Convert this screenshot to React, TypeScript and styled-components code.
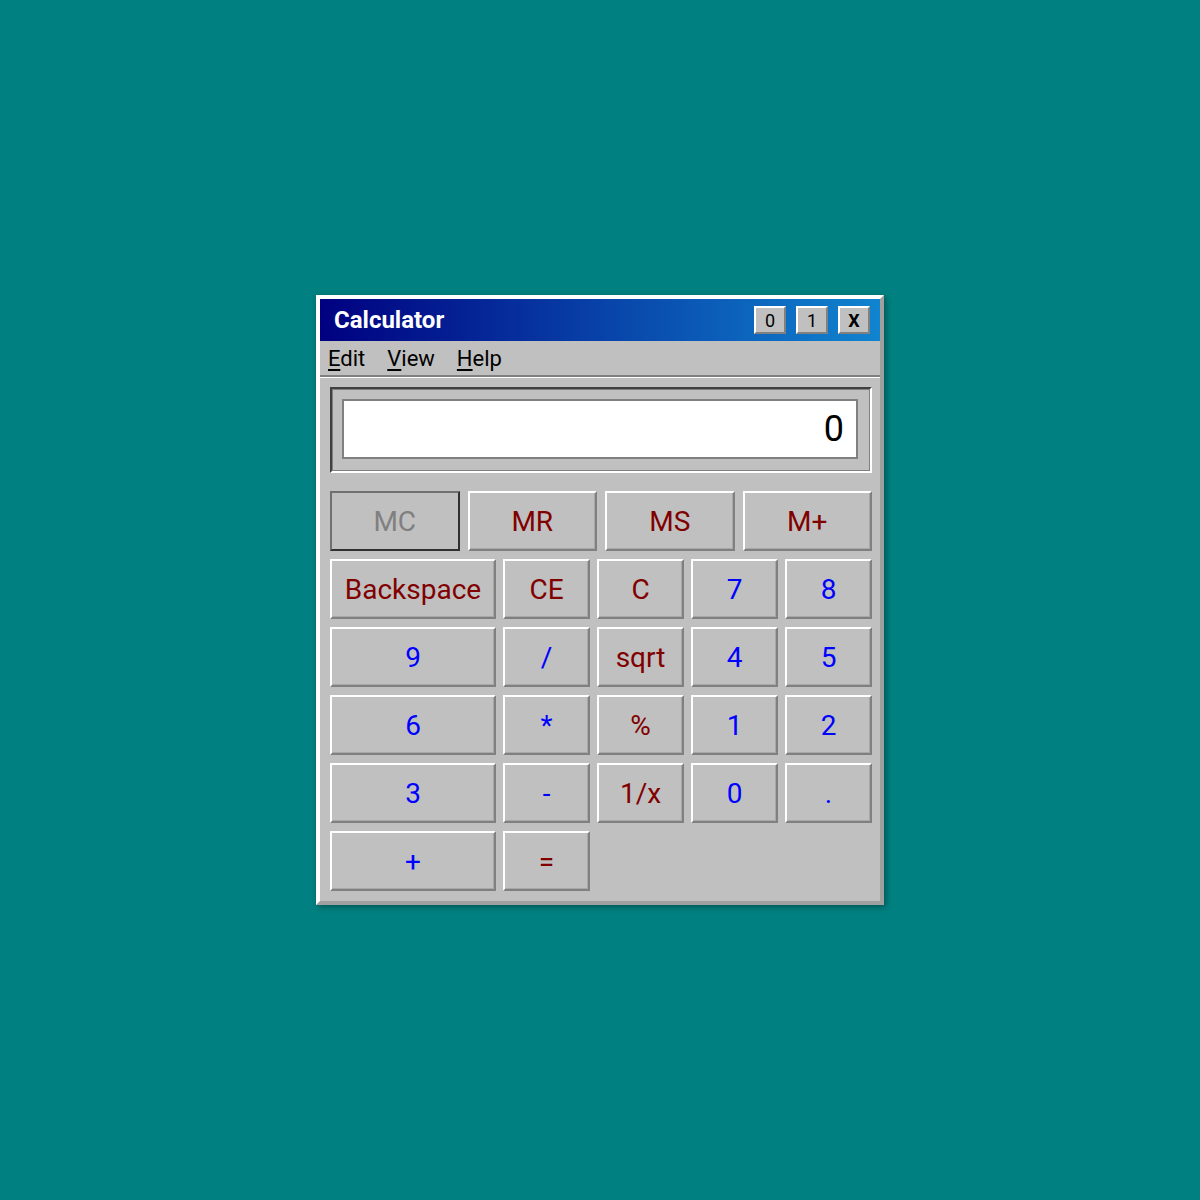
import styled, { createGlobalStyle } from 'styled-components';

const GlobalStyle = createGlobalStyle`
  html, body {
    margin: 0;
    padding: 0;
    background: #008080;
    font-family: Roboto, "Liberation Sans", sans-serif;
  }
`;

const Desktop = styled.div`
  min-height: 100vh;
  display: flex;
  align-items: center;
  justify-content: center;
`;

const Window = styled.div`
  width: 560px;
  background: #c0c0c0;
  border: 4px solid;
  border-color: #ffffff #a0a0a0 #a0a0a0 #ffffff;
  box-shadow: 2px 2px 6px rgba(0, 0, 0, 0.35);
`;

const TitleBar = styled.div`
  height: 42px;
  display: flex;
  align-items: center;
  padding: 0 10px 0 14px;
  background: linear-gradient(to right, #000080, #1084d0);
`;

const Title = styled.div`
  flex: 1;
  color: #ffffff;
  font-size: 24px;
  font-weight: 700;
`;

const TitleButtons = styled.div`
  display: flex;
  gap: 10px;
`;

const TitleButton = styled.button<{ $bold?: boolean }>`
  width: 32px;
  height: 28px;
  padding: 0;
  background: #c0c0c0;
  border: 2px solid;
  border-color: #ffffff #808080 #808080 #ffffff;
  font-family: inherit;
  font-size: 18px;
  font-weight: ${(p) => (p.$bold ? 700 : 400)};
  color: #000000;
`;

const MenuBar = styled.div`
  height: 34px;
  display: flex;
  align-items: center;
  gap: 22px;
  padding: 0 8px;
  font-size: 22px;
  color: #000000;
  border-bottom: 2px solid #808080;
  box-shadow: 0 1px 0 #ffffff;
`;

const MenuItem = styled.span`
  u {
    text-decoration-thickness: 2px;
    text-underline-offset: 3px;
  }
`;

const Body = styled.div`
  padding: 10px 8px 10px 10px;
`;

const DisplayFrame = styled.div`
  height: 86px;
  box-sizing: border-box;
  padding: 10px 12px 12px 10px;
  border: 2px solid;
  border-color: #404040 #ffffff #ffffff #404040;
  outline: 1px solid #808080;
  outline-offset: -3px;
`;

const Display = styled.div`
  height: 100%;
  box-sizing: border-box;
  background: #ffffff;
  border: 2px solid #808080;
  display: flex;
  align-items: center;
  justify-content: flex-end;
  padding-right: 12px;
  font-size: 36px;
  color: #000000;
`;

const MemoryRow = styled.div`
  margin-top: 18px;
  display: grid;
  grid-template-columns: repeat(4, 1fr);
  gap: 8px;
`;

const Keypad = styled.div`
  margin-top: 8px;
  display: grid;
  grid-template-columns: 166px repeat(4, 1fr);
  grid-auto-rows: 60px;
  column-gap: 7px;
  row-gap: 8px;
`;

const Key = styled.button<{ $tone: 'red' | 'blue' | 'off' }>`
  height: 60px;
  padding: 0;
  background: #c0c0c0;
  border: 2px solid;
  border-color: ${(p) =>
    p.$tone === 'off'
      ? '#707070 #303030 #303030 #707070'
      : '#ffffff #808080 #808080 #ffffff'};
  box-shadow: ${(p) => (p.$tone === 'off' ? 'none' : 'inset -1px -1px 0 #a8a8a8')};
  font-family: inherit;
  font-size: 28px;
  color: ${(p) => (p.$tone === 'red' ? '#800000' : p.$tone === 'blue' ? '#0000ff' : '#808080')};
`;

type Tone = 'red' | 'blue' | 'off';

const memoryKeys: [string, Tone][] = [
  ['MC', 'off'],
  ['MR', 'red'],
  ['MS', 'red'],
  ['M+', 'red'],
];

const keys: [string, Tone][] = [
  ['Backspace', 'red'],
  ['CE', 'red'],
  ['C', 'red'],
  ['7', 'blue'],
  ['8', 'blue'],
  ['9', 'blue'],
  ['/', 'blue'],
  ['sqrt', 'red'],
  ['4', 'blue'],
  ['5', 'blue'],
  ['6', 'blue'],
  ['*', 'blue'],
  ['%', 'red'],
  ['1', 'blue'],
  ['2', 'blue'],
  ['3', 'blue'],
  ['-', 'blue'],
  ['1/x', 'red'],
  ['0', 'blue'],
  ['.', 'blue'],
  ['+', 'blue'],
  ['=', 'red'],
];

function App() {
  return (
    <Desktop>
      <GlobalStyle />
      <Window>
        <TitleBar>
          <Title>Calculator</Title>
          <TitleButtons>
            <TitleButton>0</TitleButton>
            <TitleButton>1</TitleButton>
            <TitleButton $bold>X</TitleButton>
          </TitleButtons>
        </TitleBar>
        <MenuBar>
          <MenuItem>
            <u>E</u>dit
          </MenuItem>
          <MenuItem>
            <u>V</u>iew
          </MenuItem>
          <MenuItem>
            <u>H</u>elp
          </MenuItem>
        </MenuBar>
        <Body>
          <DisplayFrame>
            <Display>0</Display>
          </DisplayFrame>
          <MemoryRow>
            {memoryKeys.map(([label, tone]) => (
              <Key key={label} $tone={tone}>
                {label}
              </Key>
            ))}
          </MemoryRow>
          <Keypad>
            {keys.map(([label, tone]) => (
              <Key key={label} $tone={tone}>
                {label}
              </Key>
            ))}
          </Keypad>
        </Body>
      </Window>
    </Desktop>
  );
}

export default App;
